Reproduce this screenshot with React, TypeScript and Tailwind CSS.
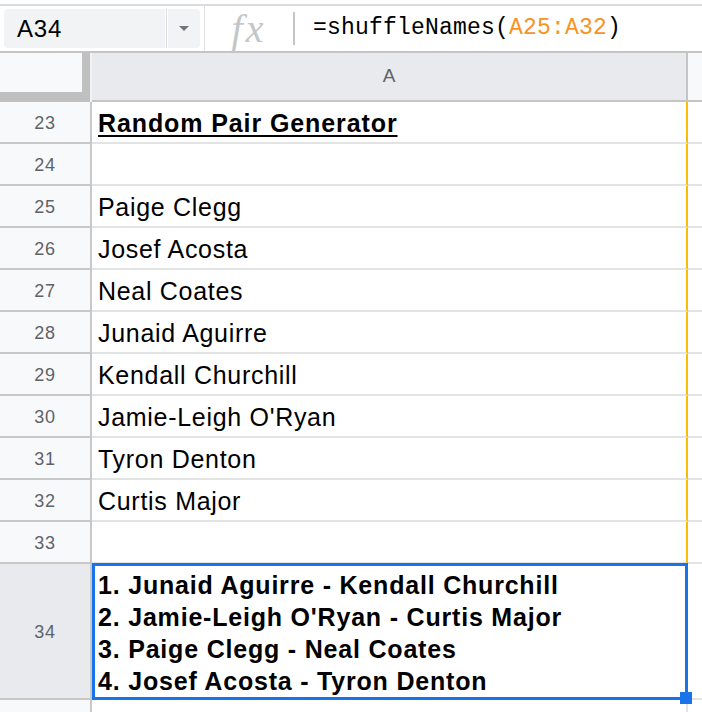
const rows = [
  { n: 23, text: "Random Pair Generator", title: true },
  { n: 24, text: "" },
  { n: 25, text: "Paige Clegg" },
  { n: 26, text: "Josef Acosta" },
  { n: 27, text: "Neal Coates" },
  { n: 28, text: "Junaid Aguirre" },
  { n: 29, text: "Kendall Churchill" },
  { n: 30, text: "Jamie-Leigh O'Ryan" },
  { n: 31, text: "Tyron Denton" },
  { n: 32, text: "Curtis Major" },
  { n: 33, text: "" },
];

const pairs = [
  "1. Junaid Aguirre - Kendall Churchill",
  "2. Jamie-Leigh O'Ryan - Curtis Major",
  "3. Paige Clegg - Neal Coates",
  "4. Josef Acosta - Tyron Denton",
];

const App = () => {
  return (
    <div className="w-[702px] h-[712px] overflow-hidden bg-white font-['Liberation_Sans',Arial,sans-serif] text-black">
      <div className="h-[4px]" />
      <div className="h-[2px] bg-[#dadce0]" />

      {/* formula bar */}
      <div className="flex items-center h-[47px] pl-[4px] border-b-2 border-[#c4c4c4]">
        <div className="w-[161px] h-[39px] bg-[#f1f3f4] rounded-l-[4px] flex items-center pl-[13px] text-[24px] tracking-[0.8px]">
          A34
        </div>
        <div className="w-[1px] h-[39px] bg-[#dadce0] mx-[1px]" />
        <div className="w-[32px] h-[39px] bg-[#f1f3f4] rounded-r-[4px] flex items-center justify-center">
          <div className="w-0 h-0 border-x-[5px] border-x-transparent border-t-[5px] border-t-[#70757a]" />
        </div>
        <div className="ml-[4px] w-[1px] self-stretch bg-[#e0e0e0]" />
        <div className="w-[88px] flex justify-center">
          <span className="font-['Liberation_Serif',serif] italic text-[40px] leading-none tracking-[3px] text-[#c4c7ca]">
            fx
          </span>
        </div>
        <div className="w-[2px] h-[33px] bg-[#c4c4c4]" />
        <div className="ml-[18px] font-['Liberation_Mono',monospace] text-[23px] tracking-[0.2px]">
          =shuffleNames(<span className="text-[#f7931e]">A25:A32</span>)
        </div>
      </div>

      {/* column header */}
      <div className="flex h-[49px]">
        <div className="w-[90px] bg-[#c0c0c0]">
          <div className="w-[82px] h-[39px] bg-[#f8f9fa]" />
        </div>
        <div className="w-[2px] bg-[#f1f3f4]" />
        <div className="w-[596px] bg-[#e8eaed] border-b-2 border-r-2 border-[#c4c4c4] flex items-center justify-center text-[19px] text-[#5f6368]">
          A
        </div>
        <div className="flex-1 bg-[#f8f9fa] border-b-2 border-[#c4c4c4]" />
      </div>

      {rows.map((r) => (
        <div key={r.n} className="flex h-[42px]">
          <div className="w-[92px] bg-[#f8f9fa] border-r-2 border-b-2 border-[#c8c8c8] flex items-center justify-center pt-[2px] text-[18px] tracking-[0.8px] text-[#5f6368]">
            {r.n}
          </div>
          <div className="w-[596px] border-b-2 border-b-[#e2e3e3] border-r-2 border-r-[#fbbc04] flex items-center pl-[6px] pt-[4px]">
            {r.title ? (
              <span className="text-[25px] font-bold tracking-[0.9px] underline decoration-2 underline-offset-[3px]">
                {r.text}
              </span>
            ) : (
              <span className="text-[25px] tracking-[0.7px]">{r.text}</span>
            )}
          </div>
          <div className="flex-1 border-b-2 border-[#e2e3e3]" />
        </div>
      ))}

      {/* row 34 with the selected cell */}
      <div className="flex h-[136px]">
        <div className="w-[92px] bg-[#e8eaed] border-r-2 border-b-2 border-[#c8c8c8] flex items-center justify-center pt-[2px] text-[18px] tracking-[0.8px] text-[#5f6368]">
          34
        </div>
        <div className="relative w-[596px] border-b-2 border-[#e2e3e3] flex items-center pl-[6px] pt-[4px]">
          <div className="text-[25px] font-bold tracking-[0.8px] leading-[32px]">
            {pairs.map((p) => (
              <div key={p}>{p}</div>
            ))}
          </div>
          <div className="absolute -top-[1px] left-0 right-0 -bottom-[2px] border-[3px] border-[#1a73e8] z-10" />
          <div className="absolute -right-[4px] -bottom-[6px] w-[12px] h-[12px] bg-[#1a73e8] z-20" />
        </div>
        <div className="flex-1 border-b-2 border-[#e2e3e3]" />
      </div>

      <div className="flex h-[42px]">
        <div className="w-[92px] bg-[#f8f9fa] border-r-2 border-[#c8c8c8]" />
        <div className="w-[596px] border-r-2 border-[#e2e3e3]" />
        <div className="flex-1" />
      </div>
    </div>
  );
};

export default App;
